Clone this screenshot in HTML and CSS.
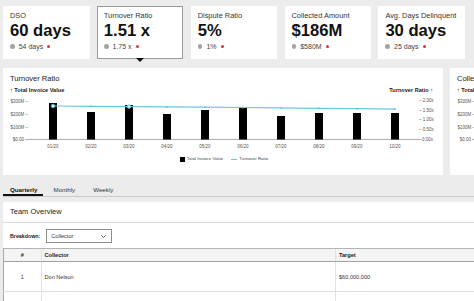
FILE: index.html
```html
<!DOCTYPE html>
<html lang="en">
<head>
<meta charset="utf-8">
<title>Collections Dashboard</title>
<link rel="stylesheet" href="styles.css">
</head>
<body>
<div class="page">
  <div class="kpis">
    <div class="kpi">
      <div class="kpi-label">DSO</div>
      <div class="kpi-value">60 days</div>
      <div class="kpi-sub"><span class="dot grey"></span><span>54 days</span><span class="dot red"></span></div>
    </div>
    <div class="kpi selected">
      <div class="kpi-label">Turnover Ratio</div>
      <div class="kpi-value">1.51 x</div>
      <div class="kpi-sub"><span class="dot grey"></span><span>1.75 x</span><span class="dot red"></span></div>
      <span class="caret"></span>
    </div>
    <div class="kpi">
      <div class="kpi-label">Dispute Ratio</div>
      <div class="kpi-value">5%</div>
      <div class="kpi-sub"><span class="dot grey"></span><span>1%</span><span class="dot red"></span></div>
    </div>
    <div class="kpi">
      <div class="kpi-label">Collected Amount</div>
      <div class="kpi-value">$186M</div>
      <div class="kpi-sub"><span class="dot grey"></span><span>$580M</span><span class="dot red"></span></div>
    </div>
    <div class="kpi">
      <div class="kpi-label">Avg. Days Delinquent</div>
      <div class="kpi-value">30 days</div>
      <div class="kpi-sub"><span class="dot grey"></span><span>25 days</span><span class="dot red"></span></div>
    </div>
  </div>

  <div class="charts">
    <section class="chart-card">
      <h2 class="card-title">Turnover Ratio</h2>
      <div class="axis-titles"><span>↑ Total Invoice Value</span><span>Turnover Ratio ↑</span></div>
      <svg class="plot" width="440" height="56" viewBox="0 0 440 56">
        <g class="ylab" text-anchor="end">
          <text x="25" y="6">$300M –</text>
          <text x="25" y="19">$200M –</text>
          <text x="25" y="32">$100M –</text>
          <text x="21" y="44">$0.00</text>
        </g>
        <line x1="22" y1="44.5" x2="418" y2="44.5" stroke="#9a9a9a" stroke-width="0.8"/>
        <g fill="#000">
          <rect x="46" y="8" width="8" height="36.5"/>
          <rect x="84" y="17" width="8" height="27.5"/>
          <rect x="122" y="10" width="8" height="34.5"/>
          <rect x="160" y="19" width="8" height="25.5"/>
          <rect x="198" y="15" width="8" height="29.5"/>
          <rect x="236" y="13" width="8" height="31.5"/>
          <rect x="274" y="21" width="8" height="23.5"/>
          <rect x="312" y="18" width="8" height="26.5"/>
          <rect x="350" y="18" width="8" height="26.5"/>
          <rect x="388" y="18" width="8" height="26.5"/>
        </g>
        <polyline fill="none" stroke="#6ac7e3" stroke-width="1.2" points="50,11 88,11.3 126,11.6 164,11.9 202,12.2 240,12.5 278,12.9 316,13.3 354,13.7 392,14.1"/>
        <g fill="#6ac7e3">
          <circle cx="88" cy="11.3" r="1"/>
          <circle cx="164" cy="11.9" r="1"/>
          <circle cx="202" cy="12.2" r="1"/>
          <circle cx="240" cy="12.5" r="1"/>
          <circle cx="278" cy="12.9" r="1"/>
          <circle cx="316" cy="13.3" r="1"/>
          <circle cx="354" cy="13.7" r="1"/>
          <circle cx="392" cy="14.1" r="1"/>
        </g>
        <circle cx="50" cy="11" r="1.8" fill="#c9eef8" stroke="#5bbfdc" stroke-width="0.8"/>
        <circle cx="126" cy="11.6" r="1.8" fill="#c9eef8" stroke="#5bbfdc" stroke-width="0.8"/>
        <g class="xlab" text-anchor="middle">
          <text x="50" y="51">01/20</text>
          <text x="88" y="51">02/20</text>
          <text x="126" y="51">03/20</text>
          <text x="164" y="51">04/20</text>
          <text x="202" y="51">05/20</text>
          <text x="240" y="51">06/20</text>
          <text x="278" y="51">07/20</text>
          <text x="316" y="51">08/20</text>
          <text x="354" y="51">09/20</text>
          <text x="392" y="51">10/20</text>
        </g>
        <g class="ylab">
          <text x="416" y="5">– 2.00x</text>
          <text x="416" y="15">– 1.50x</text>
          <text x="416" y="24.5">– 1.00x</text>
          <text x="416" y="34">– 0.50x</text>
          <text x="419" y="44">0.00x</text>
        </g>
      </svg>
      <div class="legend">
        <span class="legend-item"><span class="swatch-bar"></span>Total Invoice Value</span>
        <span class="legend-item"><span class="swatch-line"></span>Turnover Ratio</span>
      </div>
    </section>
    <section class="chart-card">
      <h2 class="card-title">Collected Amount</h2>
      <div class="axis-titles"><span>↑ Total Collected Amount</span><span>Collection Rate ↑</span></div>
      <svg class="plot" width="440" height="56" viewBox="0 0 440 56">
        <g class="ylab" text-anchor="end">
          <text x="25" y="6">$300M –</text>
          <text x="25" y="19">$200M –</text>
          <text x="25" y="32">$100M –</text>
          <text x="21" y="44">$0.00</text>
        </g>
        <line x1="22" y1="44.5" x2="418" y2="44.5" stroke="#9a9a9a" stroke-width="0.8"/>
      </svg>
    </section>
  </div>

  <nav class="tabs">
    <span class="tab active">Quarterly</span>
    <span class="tab">Monthly</span>
    <span class="tab">Weekly</span>
  </nav>

  <section class="team">
    <h2 class="team-title">Team Overview</h2>
    <div class="breakdown">
      <span class="breakdown-label">Breakdown:</span>
      <div class="select">
        <span>Collector</span>
        <svg class="chev" width="5" height="3" viewBox="0 0 5 3"><path d="M0.5 0.5 L2.5 2.5 L4.5 0.5" fill="none" stroke="#333" stroke-width="0.8"/></svg>
      </div>
    </div>
    <table class="grid">
      <colgroup><col class="c1"><col class="c2"><col class="c3"></colgroup>
      <thead>
        <tr><th class="num">#</th><th>Collector</th><th>Target</th></tr>
      </thead>
      <tbody>
        <tr><td class="num">1</td><td>Don Nelson</td><td>$60,000,000</td></tr>
        <tr><td class="num">2</td><td>Mary Walsh</td><td>$55,000,000</td></tr>
      </tbody>
    </table>
  </section>
</div>
</body>
</html>
```

FILE: styles.css
```css
html, body {
  margin: 0;
  padding: 0;
}
body {
  width: 474px;
  height: 301px;
  overflow: hidden;
  background: #ececec;
  font-family: "Liberation Sans", Arial, sans-serif;
  color: #222;
}
.page {
  width: 900px;
  padding: 6px 0 0 3px;
}

/* KPI cards */
.kpis {
  display: flex;
  gap: 7.25px;
}
.kpi {
  position: relative;
  width: 86.6px;
  box-sizing: border-box;
  background: #fff;
  border: 1px solid transparent;
  padding: 4px 6px 7px;
  white-space: nowrap;
}
.kpi.selected {
  border-color: #9a9a9a;
}
.kpi-label {
  font-size: 7.4px;
  line-height: 9px;
  color: #333;
}
.kpi-value {
  font-size: 16.6px;
  font-weight: 700;
  line-height: 22px;
  color: #111;
}
.kpi-sub {
  display: flex;
  align-items: center;
  gap: 4px;
  font-size: 7px;
  line-height: 9px;
  color: #444;
}
.dot {
  display: inline-block;
  border-radius: 50%;
}
.dot.grey {
  width: 4.7px;
  height: 4.7px;
  background: #a3a3a3;
}
.dot.red {
  width: 3.2px;
  height: 3.2px;
  background: #d6303f;
}
.caret {
  position: absolute;
  left: 50%;
  bottom: -4px;
  transform: translateX(-50%);
  width: 0;
  height: 0;
  border-left: 4.5px solid transparent;
  border-right: 4.5px solid transparent;
  border-top: 4px solid #111;
}

/* Charts */
.charts {
  display: flex;
  gap: 7px;
  margin-top: 9px;
}
.chart-card {
  width: 440px;
  flex: none;
  box-sizing: border-box;
  background: #fff;
  padding: 6px 10px 12px 7px;
  height: 107px;
  white-space: nowrap;
}
.card-title {
  margin: 0;
  font-size: 7.5px;
  font-weight: 400;
  line-height: 10px;
  color: #222;
}
.axis-titles {
  display: flex;
  justify-content: space-between;
  margin-top: 2px;
  font-size: 5.6px;
  font-weight: 700;
  line-height: 8px;
  color: #222;
}
.plot {
  display: block;
  margin: 1px -10px 0 -7px;
}
.ylab, .xlab {
  font-size: 4.5px;
  fill: #555;
  dominant-baseline: central;
}
.legend {
  display: flex;
  justify-content: center;
  gap: 8px;
  margin-top: 4px;
  padding-left: 5px;
  font-size: 4.4px;
  line-height: 8px;
  color: #444;
}
.legend-item {
  display: flex;
  align-items: center;
  gap: 2px;
}
.swatch-bar {
  width: 5px;
  height: 5px;
  background: #000;
}
.swatch-line {
  width: 6px;
  height: 1px;
  background: #6ac7e3;
}

/* Tabs */
.tabs {
  display: flex;
  border-bottom: 1px solid #c9c9c9;
}
.tab {
  font-size: 6.2px;
  line-height: 9px;
  padding: 9.5px 0 0.5px;
  border-bottom: 2px solid transparent;
  color: #333;
}
.tab.active {
  font-weight: 700;
  color: #111;
  padding-left: 7px;
  padding-right: 5px;
  border-bottom-color: #111;
}
.tab:nth-child(2) {
  margin-left: 11px;
}
.tab:nth-child(3) {
  margin-left: 18px;
}

/* Team overview */
.team {
  margin-top: 5px;
  background: #fff;
  width: 900px;
  height: 120px;
}
.team-title {
  margin: 0;
  padding: 5px 7px;
  font-size: 7.5px;
  font-weight: 400;
  line-height: 10px;
  border-bottom: 1px solid #dcdcdc;
  color: #222;
}
.breakdown {
  display: flex;
  align-items: center;
  gap: 6px;
  padding: 6px 7px 5px;
}
.breakdown-label {
  font-size: 5.3px;
  font-weight: 700;
  color: #222;
}
.select {
  width: 66px;
  height: 14px;
  box-sizing: border-box;
  border: 1px solid #8c8c8c;
  display: flex;
  align-items: center;
  justify-content: space-between;
  padding: 0 5px 0 4px;
  font-size: 5.6px;
  color: #333;
}
.chev {
  display: block;
}
.grid {
  border-collapse: collapse;
  table-layout: fixed;
  width: 880px;
  font-size: 5.6px;
  color: #333;
}
.c1 { width: 37.5px; }
.c2 { width: 294.5px; }
.grid th {
  background: #f4f4f4;
  font-weight: 700;
  color: #222;
  text-align: left;
  height: 12px;
  padding: 0 3px;
  border-top: 1px solid #b3b3b3;
  border-bottom: 1px solid #a3a3a3;
  border-left: 1px solid #e2e2e2;
}
.grid td {
  height: 29px;
  padding: 0 3px;
  border-bottom: 1px solid #dddddd;
  border-left: 1px solid #e2e2e2;
}
.grid th:first-child, .grid td:first-child {
  border-left: 1px solid #a8a8a8;
}
.grid .num {
  text-align: center;
}
```
